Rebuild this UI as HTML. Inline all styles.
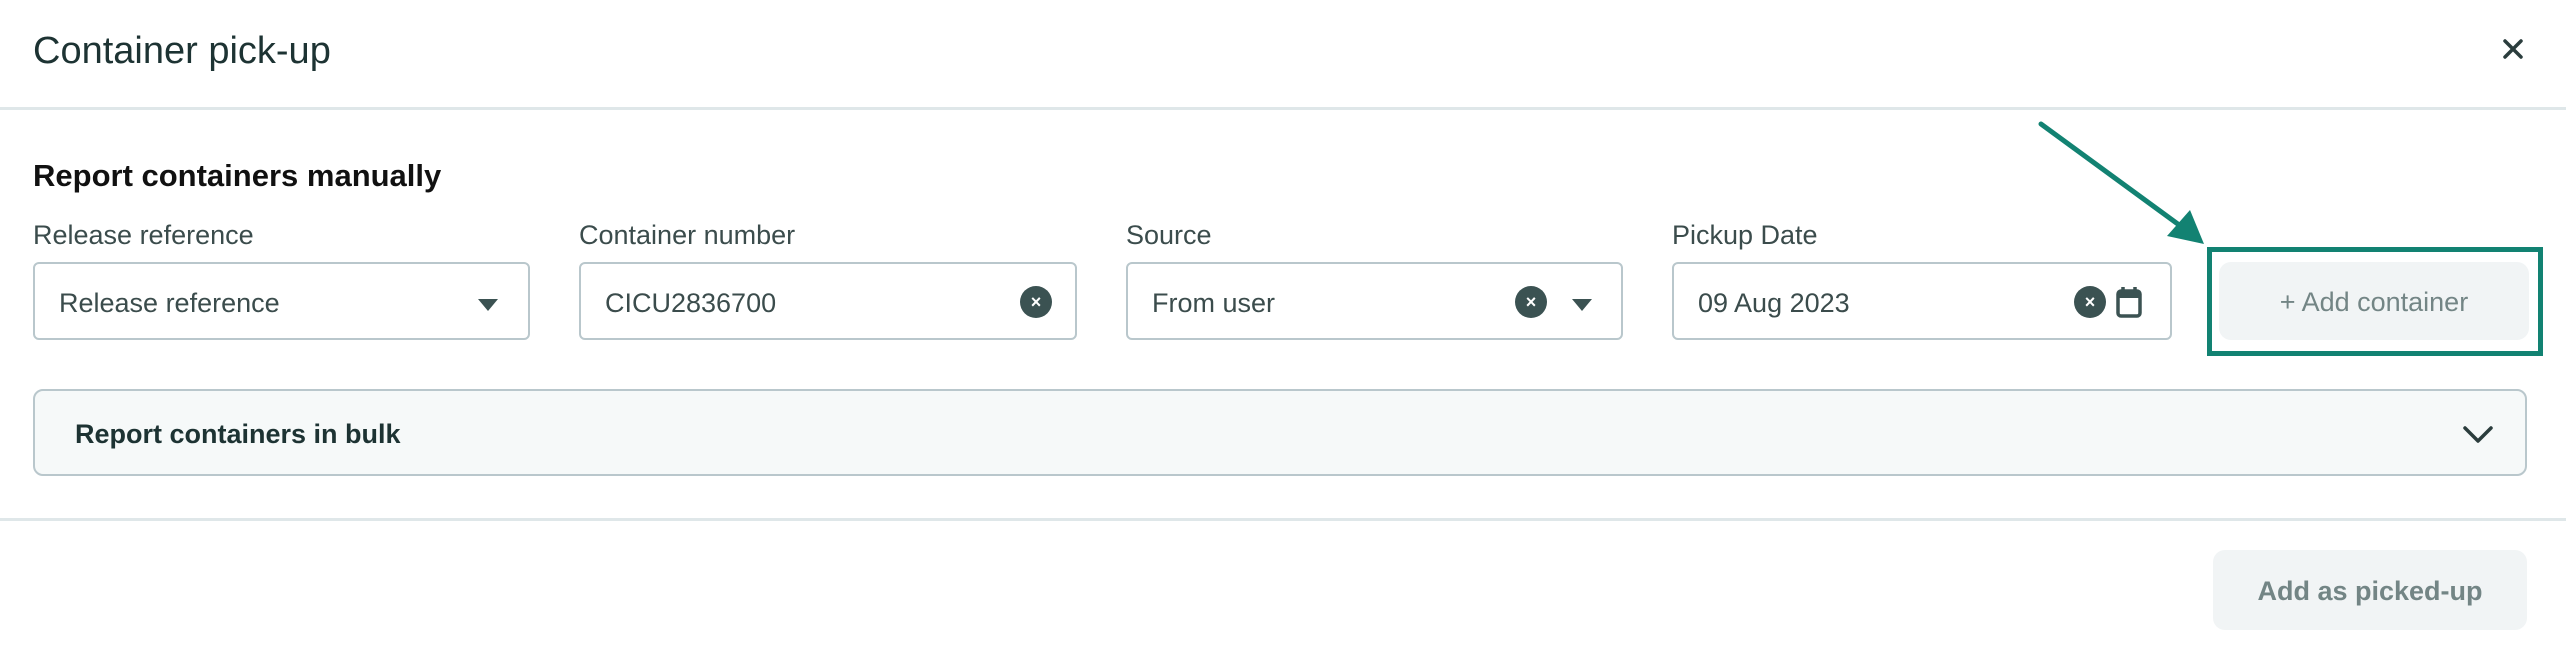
<!DOCTYPE html>
<html><head><style>
*{margin:0;padding:0;box-sizing:border-box}
body{width:2566px;height:660px;background:#fff;font-family:"Liberation Sans",sans-serif;position:relative;overflow:hidden;color:#1d3333}
.a{position:absolute}
.title{left:33px;top:30px;font-size:38px;color:#1d3333}
.hr{left:0;width:2566px;height:3px;background:#dfe7e9}
.h2{left:33px;top:158px;font-size:31px;font-weight:bold;color:#111}
.lbl{top:220px;font-size:27px;color:#3b4c4c}
.inp{top:262px;height:78px;border:2px solid #b9c7cc;border-radius:6px;background:#fff}
.inp span{position:absolute;left:24px;top:24px;font-size:27px;color:#3b4c4c}
.clr{position:absolute;width:32px;height:32px;border-radius:50%;background:#3b5252;top:22px;color:#fff;font-size:18px;font-weight:bold;text-align:center;line-height:32px}
.tri{position:absolute;top:35px;width:0;height:0;border-left:10px solid transparent;border-right:10px solid transparent;border-top:12px solid #3b5252}
.btn{background:#f1f4f5;border-radius:12px;color:#738585;font-size:27px;text-align:center}
</style></head><body>
<div class="a title">Container pick-up</div>
<svg class="a" style="left:2502px;top:38px" width="22" height="22" viewBox="0 0 22 22"><path d="M3 3L19 19M19 3L3 19" stroke="#2b3d3d" stroke-width="3.5" stroke-linecap="round"/></svg>
<div class="a hr" style="top:107px"></div>
<div class="a h2">Report containers manually</div>
<div class="a lbl" style="left:33px">Release reference</div>
<div class="a lbl" style="left:579px">Container number</div>
<div class="a lbl" style="left:1126px">Source</div>
<div class="a lbl" style="left:1672px">Pickup Date</div>
<div class="a inp" style="left:33px;width:497px"><span>Release reference</span><div class="tri" style="left:443px"></div></div>
<div class="a inp" style="left:579px;width:498px"><span>CICU2836700</span><div class="clr" style="left:439px">×</div></div>
<div class="a inp" style="left:1126px;width:497px"><span>From user</span><div class="clr" style="left:387px">×</div><div class="tri" style="left:444px"></div></div>
<div class="a inp" style="left:1672px;width:500px"><span>09 Aug 2023</span><div class="clr" style="left:400px">×</div>
<svg style="position:absolute;left:441px;top:21px" width="28" height="34" viewBox="0 0 28 34"><rect x="3" y="6" width="22" height="25" rx="3" fill="none" stroke="#3b5252" stroke-width="3.5"/><rect x="3" y="6" width="22" height="7" fill="#3b5252"/><path d="M8 2v6M20 2v6" stroke="#3b5252" stroke-width="3.5"/></svg></div>
<div class="a btn" style="left:2219px;top:262px;width:310px;height:78px;line-height:80px">+ Add container</div>
<div class="a" style="left:2207px;top:247px;width:336px;height:109px;border:5px solid #128272"></div>
<svg class="a" style="left:0;top:0" width="2566" height="660"><line x1="2041" y1="124" x2="2186" y2="230" stroke="#128272" stroke-width="5" stroke-linecap="round"/><polygon points="2204,244 2167,236 2190,210" fill="#128272"/></svg>
<div class="a" style="left:33px;top:389px;width:2494px;height:87px;border:2px solid #b9c7cc;border-radius:10px;background:#f6f9f9"></div>
<div class="a" style="left:75px;top:419px;font-size:27px;font-weight:bold;color:#1d3333">Report containers in bulk</div>
<svg class="a" style="left:2462px;top:425px" width="32" height="20" viewBox="0 0 32 20"><path d="M3 3L16 16L29 3" fill="none" stroke="#2b3d3d" stroke-width="3.5" stroke-linecap="round" stroke-linejoin="round"/></svg>
<div class="a hr" style="top:518px"></div>
<div class="a btn" style="left:2213px;top:550px;width:314px;height:80px;line-height:82px;font-weight:bold">Add as picked-up</div>
</body></html>
